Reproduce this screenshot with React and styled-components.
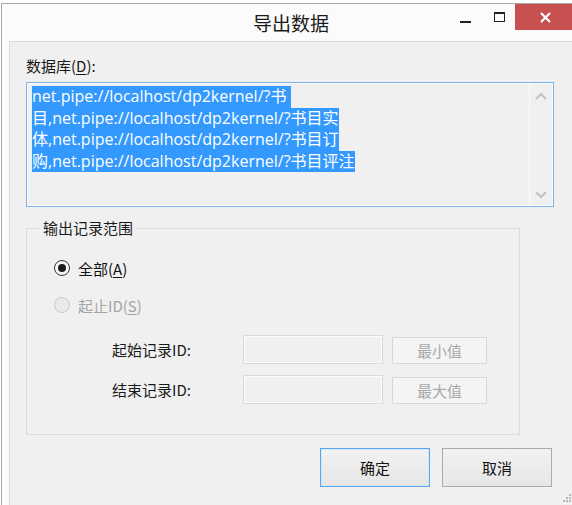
import React from "react";
import styled, { createGlobalStyle } from "styled-components";

const GlobalStyle = createGlobalStyle`
  html, body {
    margin: 0;
    padding: 0;
    background: #ffffff;
    overflow: hidden;
  }
  body {
    font-family: "Noto Sans CJK SC", "Noto Sans", sans-serif;
    font-size: 15px;
    color: #000;
  }
`;

const Window = styled.div`
  width: 571px;
  height: 502px;
  margin: 3px 0 0 1px;
  border-top: 1px solid #a9a9a9;
  border-left: 1px solid #a9a9a9;
  background: #fbfbfb;
  display: flex;
  flex-direction: column;
  padding: 0 0 0 7px;
  box-sizing: border-box;
  overflow: hidden;
`;

const TitleBar = styled.div`
  height: 37px;
  display: flex;
  align-items: flex-start;
`;

const Title = styled.div`
  margin: 6px 0 0 244px;
  font-size: 19px;
  line-height: 26px;
  color: #1b1b1b;
`;

const Caption = styled.div`
  margin-left: auto;
  display: flex;
  align-items: flex-start;
`;

const MinGlyph = styled.div`
  width: 11px;
  height: 2px;
  margin: 17px 23px 0 0;
  background: #222;
`;

const MaxGlyph = styled.div`
  width: 11px;
  height: 10px;
  margin: 8px 10px 0 0;
  box-sizing: border-box;
  border: 1px solid #222;
  border-top-width: 2px;
`;

const CloseButton = styled.div`
  width: 57px;
  height: 26px;
  padding-left: 3px;
  box-sizing: border-box;
  background: #c75050;
  display: flex;
  align-items: center;
  justify-content: center;
`;

const Client = styled.div`
  flex: 1;
  min-width: 0;
  background: #f0f0f0;
  border-top: 1px solid #dadada;
  border-left: 1px solid #dadada;
  padding: 13px 0 0 16px;
  display: flex;
  flex-direction: column;
  position: relative;
`;

const FieldLabel = styled.div`
  line-height: 22px;
  height: 22px;
  color: #1a1a1a;
`;

const Key = styled.span`
  text-decoration: underline;
  text-underline-offset: 2px;
`;

const TextBox = styled.div`
  margin-top: 5px;
  width: 528px;
  height: 125px;
  box-sizing: border-box;
  border: 1px solid #7ab3ea;
  display: flex;
`;

const TextArea = styled.div`
  flex: 1;
  border: 1px solid #fbfbfb;
  border-right: none;
  padding: 2px 0 0 4px;
  font-family: "Open Sans", "Noto Sans CJK SC", sans-serif;
  font-size: 16px;
`;

const Selected = styled.div`
  width: fit-content;
  height: 21.5px;
  line-height: 21.5px;
  background: #3399ff;
  color: #ffffff;
  white-space: pre;
`;

const ScrollBar = styled.div`
  width: 22px;
  border: 1px solid #fbfbfb;
  display: flex;
  flex-direction: column;
  justify-content: space-between;
  align-items: center;
  padding: 8px 0 6px;
`;

const Group = styled.fieldset`
  margin: 10px 0 0 0;
  padding: 0 0 30px 0;
  width: 494px;
  box-sizing: border-box;
  border: 1px solid #dcdcdc;
  min-inline-size: auto;
`;

const Legend = styled.legend`
  margin-left: 13px;
  padding: 0 3px;
  line-height: 22px;
  color: #1a1a1a;
`;

const RadioRow = styled.label`
  display: flex;
  align-items: center;
  height: 22px;
  margin: ${(p) => p.$top}px 0 0 27px;
  color: ${(p) => (p.$disabled ? "#a3a3a3" : "#111")};
`;

const RadioDot = styled.span`
  width: 16px;
  height: 16px;
  box-sizing: border-box;
  border-radius: 50%;
  border: 1px solid ${(p) => (p.$disabled ? "#c9c9c9" : "#333")};
  background: ${(p) => (p.$disabled ? "#e9e9e9" : "#f6f6f6")};
  margin-right: 8px;
  display: flex;
  align-items: center;
  justify-content: center;
  &::after {
    content: "";
    width: 8px;
    height: 8px;
    border-radius: 50%;
    background: #1a1a1a;
    display: ${(p) => (p.$checked ? "block" : "none")};
  }
`;

const RangeRow = styled.div`
  display: flex;
  align-items: center;
  margin-top: ${(p) => p.$top}px;
  padding-left: 85px;
`;

const RangeLabel = styled.div`
  width: 131px;
  color: #1a1a1a;
`;

const RangeInput = styled.div`
  width: 140px;
  height: 29px;
  box-sizing: border-box;
  border: 1px solid #d9d9d9;
  box-shadow: inset 0 0 0 1px #fbfbfb;
  background: #f0f0f0;
`;

const SmallButton = styled.div`
  margin: 2px 0 0 9px;
  width: 95px;
  height: 27px;
  box-sizing: border-box;
  border: 1px solid #d7d7d7;
  background: #f4f4f4;
  color: #a8a8a8;
  display: flex;
  align-items: center;
  justify-content: center;
`;

const ButtonRow = styled.div`
  display: flex;
  justify-content: flex-end;
  gap: 12px;
  width: 526px;
  margin-top: 13px;
`;

const DialogButton = styled.div`
  width: 110px;
  height: 39px;
  box-sizing: border-box;
  border: 1px solid ${(p) => (p.$primary ? "#5aa6ee" : "#acacac")};
  box-shadow: ${(p) => (p.$primary ? "inset 0 0 0 1px #d6e9fb" : "none")};
  background: linear-gradient(#f2f2f2, #e6e6e6);
  display: flex;
  align-items: center;
  justify-content: center;
  color: #111;
`;

const Grip = styled.svg`
  position: absolute;
  left: 552px;
  top: 451px;
`;

const Chevron = ({ up }) => (
  <svg width="12" height="8" viewBox="0 0 12 8">
    <path
      d={up ? "M1 7 L6 2 L11 7" : "M1 1 L6 6 L11 1"}
      fill="none"
      stroke="#c2c2c2"
      strokeWidth="2"
    />
  </svg>
);

const lines = [
  "net.pipe://localhost/dp2kernel/?书 ",
  "目,net.pipe://localhost/dp2kernel/?书目实",
  "体,net.pipe://localhost/dp2kernel/?书目订",
  "购,net.pipe://localhost/dp2kernel/?书目评注",
];

export default function App() {
  return (
    <>
      <GlobalStyle />
      <Window>
        <TitleBar>
          <Title>导出数据</Title>
          <Caption>
            <MinGlyph />
            <MaxGlyph />
            <CloseButton>
              <svg width="11" height="11" viewBox="0 0 11 11">
                <path d="M1 1 L10 10 M10 1 L1 10" stroke="#fff" strokeWidth="2.2" />
              </svg>
            </CloseButton>
          </Caption>
        </TitleBar>
        <Client>
          <FieldLabel>
            数据库(<Key>D</Key>):
          </FieldLabel>
          <TextBox>
            <TextArea>
              {lines.map((l) => (
                <Selected key={l}>{l}</Selected>
              ))}
            </TextArea>
            <ScrollBar>
              <Chevron up />
              <Chevron />
            </ScrollBar>
          </TextBox>
          <Group>
            <Legend>输出记录范围</Legend>
            <RadioRow $top={18}>
              <RadioDot $checked />
              全部(<Key>A</Key>)
            </RadioRow>
            <RadioRow $top={15} $disabled>
              <RadioDot $disabled />
              起止ID(<Key>S</Key>)
            </RadioRow>
            <RangeRow $top={19}>
              <RangeLabel>起始记录ID:</RangeLabel>
              <RangeInput />
              <SmallButton>最小值</SmallButton>
            </RangeRow>
            <RangeRow $top={11}>
              <RangeLabel>结束记录ID:</RangeLabel>
              <RangeInput />
              <SmallButton>最大值</SmallButton>
            </RangeRow>
          </Group>
          <ButtonRow>
            <DialogButton $primary>确定</DialogButton>
            <DialogButton>取消</DialogButton>
          </ButtonRow>
          <Grip width="10" height="10" viewBox="0 0 10 10">
            <g fill="#b8b8b8">
              <rect x="7" y="1" width="2" height="2" />
              <rect x="4" y="4" width="2" height="2" />
              <rect x="7" y="4" width="2" height="2" />
              <rect x="1" y="7" width="2" height="2" />
              <rect x="4" y="7" width="2" height="2" />
              <rect x="7" y="7" width="2" height="2" />
            </g>
          </Grip>
        </Client>
      </Window>
    </>
  );
}
